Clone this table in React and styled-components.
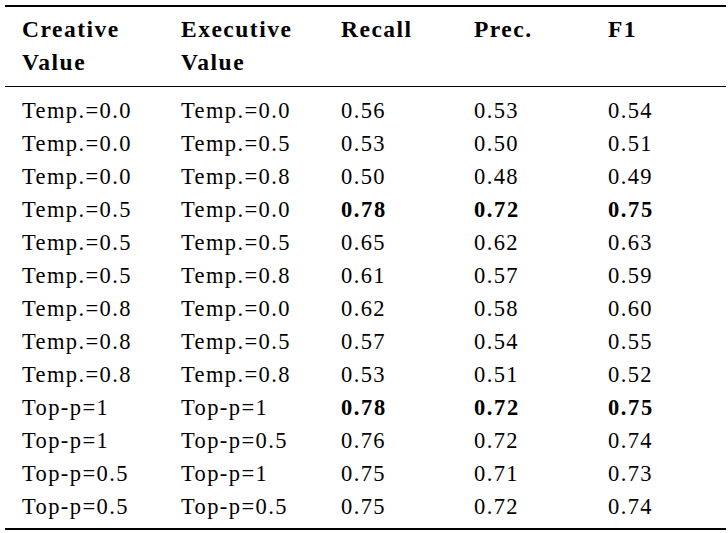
import React from "react";
import styled, { createGlobalStyle } from "styled-components";

const GlobalStyle = createGlobalStyle`
  body {
    margin: 0;
    background: #fff;
    font-family: "Liberation Serif", "Times New Roman", serif;
    color: #000;
  }
`;

const rows = [
  ["Temp.=0.0", "Temp.=0.0", "0.56", "0.53", "0.54"],
  ["Temp.=0.0", "Temp.=0.5", "0.53", "0.50", "0.51"],
  ["Temp.=0.0", "Temp.=0.8", "0.50", "0.48", "0.49"],
  ["Temp.=0.5", "Temp.=0.0", "0.78", "0.72", "0.75", true],
  ["Temp.=0.5", "Temp.=0.5", "0.65", "0.62", "0.63"],
  ["Temp.=0.5", "Temp.=0.8", "0.61", "0.57", "0.59"],
  ["Temp.=0.8", "Temp.=0.0", "0.62", "0.58", "0.60"],
  ["Temp.=0.8", "Temp.=0.5", "0.57", "0.54", "0.55"],
  ["Temp.=0.8", "Temp.=0.8", "0.53", "0.51", "0.52"],
  ["Top-p=1", "Top-p=1", "0.78", "0.72", "0.75", true],
  ["Top-p=1", "Top-p=0.5", "0.76", "0.72", "0.74"],
  ["Top-p=0.5", "Top-p=1", "0.75", "0.71", "0.73"],
  ["Top-p=0.5", "Top-p=0.5", "0.75", "0.72", "0.74"],
];

const colWidths = [176, 160, 133, 134, 118];

const Wrap = styled.div`
  padding: 5px 0 0 5px;
`;

const Table = styled.table`
  width: 721px;
  border-collapse: collapse;
  table-layout: fixed;
  font-size: 22.5px;
  border-top: 2px solid #000;
  border-bottom: 2px solid #000;
`;

const HeadCell = styled.th`
  text-align: left;
  vertical-align: top;
  font-weight: bold;
  font-size: 23.5px;
  letter-spacing: 1.5px;
  line-height: 33px;
  padding: 6px 0 7px ${(p) => (p.$first ? "17px" : "0")};
  border-bottom: 1px solid #000;
`;

const Body = styled.tbody`
  tr:first-child td {
    padding-top: 7px;
  }
  tr:last-child td {
    padding-bottom: 5px;
  }
`;

const Cell = styled.td`
  line-height: 33px;
  padding: 0 0 0 ${(p) => (p.$first ? "17px" : "0")};
  font-weight: ${(p) => (p.$bold ? "bold" : "normal")};
  letter-spacing: ${(p) => (p.$bold ? "1.6px" : "1.4px")};
  white-space: nowrap;
`;

export default function App() {
  return (
    <Wrap>
      <GlobalStyle />
      <Table>
        <colgroup>
          {colWidths.map((w, i) => (
            <col key={i} style={{ width: w }} />
          ))}
        </colgroup>
        <thead>
          <tr>
            <HeadCell $first>
              Creative
              <br />
              Value
            </HeadCell>
            <HeadCell>
              Executive
              <br />
              Value
            </HeadCell>
            <HeadCell>Recall</HeadCell>
            <HeadCell>Prec.</HeadCell>
            <HeadCell>F1</HeadCell>
          </tr>
        </thead>
        <Body>
          {rows.map((r, i) => (
            <tr key={i}>
              <Cell $first>{r[0]}</Cell>
              <Cell>{r[1]}</Cell>
              <Cell $bold={r[5]}>{r[2]}</Cell>
              <Cell $bold={r[5]}>{r[3]}</Cell>
              <Cell $bold={r[5]}>{r[4]}</Cell>
            </tr>
          ))}
        </Body>
      </Table>
    </Wrap>
  );
}
